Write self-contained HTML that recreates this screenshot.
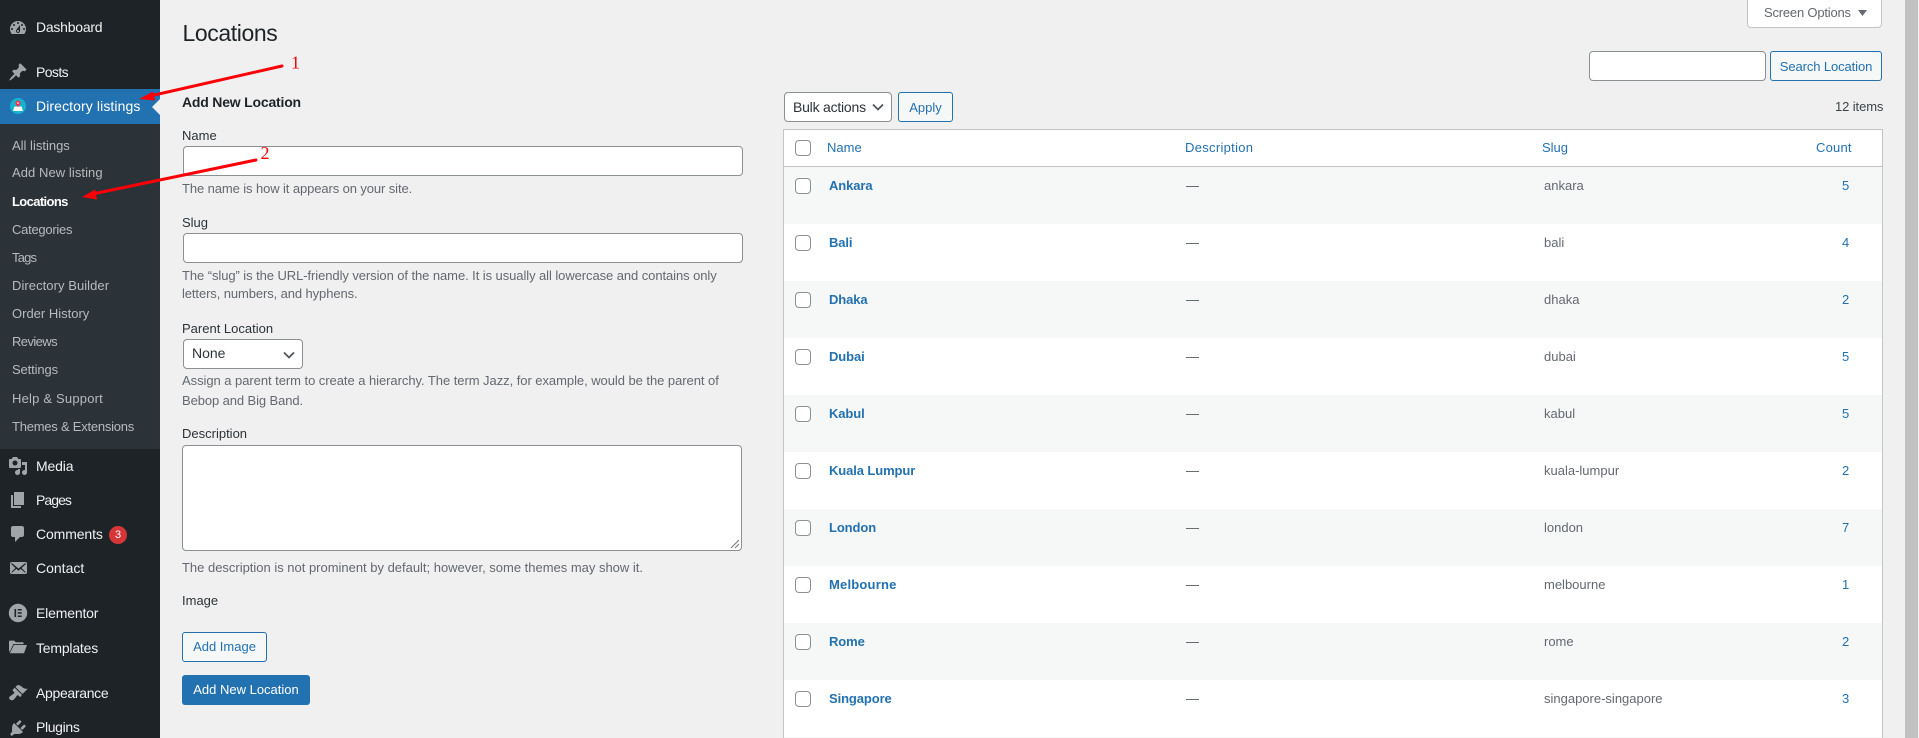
<!DOCTYPE html>
<html lang="en">
<head>
<meta charset="utf-8">
<title>Locations</title>
<style>
html,body{margin:0;padding:0;width:1919px;height:738px;overflow:hidden;background:#f0f0f0;font-family:"Liberation Sans",Arial,sans-serif;font-size:13px;color:#2c3338}
#wrap{position:relative;width:1919px;height:738px;overflow:hidden;background:#f0f0f0}
.t{position:absolute;white-space:nowrap;line-height:20px;height:20px}
.box{position:absolute;box-sizing:border-box}
#side{position:absolute;left:0;top:0;width:160px;height:738px;background:#1d2327}
#sub{position:absolute;left:0;top:124px;width:160px;height:325px;background:#2c3338}
#cur{position:absolute;left:0;top:89px;width:160px;height:35px;background:#2271b1}
#notch{position:absolute;left:152px;top:99px;width:0;height:0;border-style:solid;border-width:8px 8px 8px 0;border-color:transparent #f0f0f0 transparent transparent}
.m{font-size:14px;color:#f0f0f1;left:36px}
.s{font-size:13px;color:#b6babd;left:12px}
svg.i{position:absolute;width:20px;height:20px;fill:#a0a5aa}
.inp{background:#fff;border:1px solid #8c8f94;border-radius:4px}
.btn2{background:#f6f7f7;border:1px solid #2271b1;border-radius:3px;color:#2271b1;text-align:center}
.h{color:#646970}
.l{color:#2c3338}
.cb{position:absolute;left:795px;width:16px;height:16px;box-sizing:border-box;background:#fff;border:1px solid #8c8f94;border-radius:4px}
.row{position:absolute;left:784px;width:1098px;height:57px}
.alt{background:#f6f7f7}
.wh{background:#fff}
.n{left:829px;font-weight:bold;color:#2271b1;font-size:13px;letter-spacing:-.1px}
.d{left:1186px;color:#50575e}
.sl{left:1544px;color:#646970}
.c{left:1842px;width:6px;color:#2271b1}
.th{color:#2271b1;top:138px}
</style>
</head>
<body>
<div id="wrap">
<div id="side"></div>
<div id="sub"></div>
<div id="cur"></div>
<div id="notch"></div>

<svg class="i" style="left:8px;top:18px" viewBox="0 0 20 20"><path d="M3.76 16h12.48c1.1-1.37 1.76-3.11 1.76-5 0-4.42-3.58-8-8-8s-8 3.58-8 8c0 1.89.66 3.63 1.76 5zM10 4c.55 0 1 .45 1 1s-.45 1-1 1-1-.45-1-1 .45-1 1-1zM6 6c.55 0 1 .45 1 1s-.45 1-1 1-1-.45-1-1 .45-1 1-1zm8 0c.55 0 1 .45 1 1s-.45 1-1 1-1-.45-1-1 .45-1 1-1zm-5.37 5.55L12 7v6c0 1.1-.9 2-2 2s-2-.9-2-2c0-.57.24-1.08.63-1.45zM4 10c.55 0 1 .45 1 1s-.45 1-1 1-1-.45-1-1 .45-1 1-1zm12 0c.55 0 1 .45 1 1s-.45 1-1 1-1-.45-1-1 .45-1 1-1zm-5 3c0-.55-.45-1-1-1s-1 .45-1 1 .45 1 1 1 1-.45 1-1z" fill-rule="evenodd"/></svg>
<svg class="i" style="left:8px;top:62px" viewBox="0 0 20 20"><path d="M10.44 3.02l1.82-1.82 6.36 6.35-1.83 1.82c-1.05-.68-2.48-.57-3.41.36l-.75.75c-.92.93-1.04 2.35-.35 3.41l-1.83 1.82-2.41-2.41-2.8 2.79c-.42.42-3.38 2.71-3.8 2.29s1.86-3.39 2.28-3.81l2.79-2.79L4.1 9.36l1.83-1.82c1.05.69 2.48.57 3.4-.36l.75-.75c.93-.92 1.05-2.35.36-3.41z"/></svg>
<svg style="position:absolute;left:10px;top:98px;width:16px;height:16px" viewBox="0 0 16 16"><circle cx="8" cy="8" r="8" fill="#16b3d0"/><path d="M4.5 8.5h7l1.5 4.500H3z" fill="#fff"/><path d="M8 2.500c1.500 0 2.600 1.100 2.600 2.500 0 1.500-1.600 3-2.600 4-1-1-2.600-2.500-2.600-4 0-1.400 1.100-2.500 2.600-2.500z" fill="#f0354a"/><circle cx="8" cy="5" r=".9" fill="#fff"/></svg>
<svg class="i" style="left:8px;top:456px" viewBox="0 0 20 20"><path d="M13 11V4c0-.55-.45-1-1-1h-1.670L9 1H5L3.670 3H2c-.55 0-1 .45-1 1v7c0 .55.45 1 1 1h10c.55 0 1-.45 1-1zM7 4.500c1.380 0 2.500 1.120 2.500 2.500S8.380 9.500 7 9.500 4.500 8.380 4.500 7 5.620 4.500 7 4.500zM14 6h5v10.500c0 1.380-1.120 2.500-2.500 2.500S14 17.880 14 16.500s1.120-2.500 2.500-2.500c.17 0 .34.02.5.05V9h-3V6zm-4 8.050V13h2v3.500c0 1.380-1.120 2.500-2.500 2.500S7 17.880 7 16.500 8.120 14 9.500 14c.17 0 .34.02.5.05z" fill-rule="evenodd"/></svg>
<svg class="i" style="left:8px;top:490px" viewBox="0 0 20 20"><path d="M6 15V2h10v13H6zm-1 1h8v2H3V5h2v11z"/></svg>
<svg class="i" style="left:8px;top:524px" viewBox="0 0 20 20"><path d="M5 2h9c1.100 0 2 .9 2 2v7c0 1.100-.9 2-2 2h-2l-5 5v-5H5c-1.100 0-2-.9-2-2V4c0-1.100.9-2 2-2z"/></svg>
<svg class="i" style="left:8px;top:558px" viewBox="0 0 20 20"><path d="M19 14.500v-9c0-.83-.67-1.500-1.500-1.500H3.490c-.83 0-1.500.67-1.500 1.500v9c0 .83.67 1.500 1.500 1.500H17.500c.83 0 1.500-.67 1.500-1.500zm-1.310-9.110c.33.33.15.67-.03.84L13.600 9.950l3.900 4.060c.12.14.2.36.06.51-.13.16-.43.15-.56.05l-4.370-3.730-2.140 1.950-2.130-1.950-4.370 3.730c-.13.1-.43.11-.56-.05-.14-.15-.06-.37.06-.51l3.900-4.060-4.060-3.720c-.18-.17-.36-.51-.03-.84s.67-.17.95.07l6.240 5.040 6.250-5.040c.28-.24.62-.4.95-.07z" fill-rule="evenodd"/></svg>
<svg class="i" style="left:8px;top:603px" viewBox="0 0 20 20"><circle cx="10" cy="10" r="9.200"/><path d="M6.500 6h1.600v8H6.500zM9.700 6h4v1.500h-4zM9.700 9.250h4v1.500h-4zM9.700 12.500h4V14h-4z" fill="#1d2327"/></svg>
<svg class="i" style="left:8px;top:637px" viewBox="0 0 20 20"><path d="M1 4.500c0-.5.4-.9.9-.9h4.300l1.500 1.700h7c.5 0 .9.4.9.900v.9H5.300L2.400 13.500 1 15zM5.900 8h13.100l-3 8.200H1.800z"/></svg>
<svg class="i" style="left:8px;top:683px" viewBox="0 0 20 20"><path d="M14.480 11.060L7.410 3.990l1.500-1.500c.5-.56 2.300-.47 3.510.32 1.210.8 1.430 1.280 2.910 2.100 1.180.64 2.450 1.260 4.450.85zm-.71.71L6.700 4.700 4.930 6.470c-.39.39-.39 1.020 0 1.410l1.060 1.060c.39.39.39 1.030 0 1.420-.6.6-1.430 1.110-2.210 1.690-.35.26-.7.53-1.010.84C1.430 13.230.4 14.960 1.990 16.500c1.560 1.580 3.260.53 4.580-.79.3-.3.57-.65.83-1.010.58-.79 1.110-1.610 1.690-2.210.39-.39 1.020-.39 1.420 0l1.060 1.060c.39.39 1.020.39 1.410 0z"/></svg>
<svg class="i" style="left:8px;top:718px" viewBox="0 0 20 20"><path d="M13.110 4.360L9.870 7.600 8 5.730l3.240-3.240c.35-.34 1.050-.2 1.560.32.52.51.66 1.210.31 1.550zm-8 1.770l.91-1.120 9.010 9.010-1.190.84c-.71.71-2.630 1.160-3.820 1.160H6.140L4.900 17.260c-.59.59-1.540.59-2.120 0-.59-.58-.59-1.530 0-2.120l1.240-1.240v-3.880c0-1.130.4-3.190 1.090-3.890zm7.260 3.970l3.240-3.240c.34-.35 1.040-.21 1.550.31.52.51.66 1.210.31 1.550l-3.240 3.250z"/></svg>

<div class="t m" style="top:17px;letter-spacing:-.24px">Dashboard</div>
<div class="t m" style="top:62px;letter-spacing:-.6px">Posts</div>
<div class="t m" style="top:96px;color:#fff;letter-spacing:.1px">Directory listings</div>
<div class="t s" style="top:136px">All listings</div>
<div class="t s" style="top:163px;letter-spacing:.07px">Add New listing</div>
<div class="t s" style="top:192px;color:#fff;font-weight:bold;letter-spacing:-.63px">Locations</div>
<div class="t s" style="top:220px;letter-spacing:-.26px">Categories</div>
<div class="t s" style="top:248px;letter-spacing:-.8px">Tags</div>
<div class="t s" style="top:276px;letter-spacing:.06px">Directory Builder</div>
<div class="t s" style="top:304px">Order History</div>
<div class="t s" style="top:332px;letter-spacing:-.59px">Reviews</div>
<div class="t s" style="top:360px;letter-spacing:-.12px">Settings</div>
<div class="t s" style="top:389px;letter-spacing:.2px">Help &amp; Support</div>
<div class="t s" style="top:417px;letter-spacing:-.23px">Themes &amp; Extensions</div>
<div class="t m" style="top:456px;letter-spacing:-.16px">Media</div>
<div class="t m" style="top:490px;letter-spacing:-.94px">Pages</div>
<div class="t m" style="top:524px;letter-spacing:-.12px">Comments</div>
<div class="box" style="left:109px;top:526px;width:18px;height:18px;border-radius:9px;background:#d63638;color:#fff;font-size:11px;line-height:18px;text-align:center">3</div>
<div class="t m" style="top:558px">Contact</div>
<div class="t m" style="top:603px;letter-spacing:-.17px">Elementor</div>
<div class="t m" style="top:638px;letter-spacing:-.2px">Templates</div>
<div class="t m" style="top:683px;letter-spacing:-.32px">Appearance</div>
<div class="t m" style="top:717px;letter-spacing:-.35px">Plugins</div>

<div class="t" style="left:182.500px;top:21px;height:24px;line-height:24px;font-size:23px;color:#1d2327;letter-spacing:-.4px">Locations</div>
<div class="t" style="left:182px;top:92px;font-size:14px;font-weight:bold;color:#1d2327;letter-spacing:-.2px">Add New Location</div>

<div class="t l" style="left:182px;top:126px">Name</div>
<div class="box inp" style="left:183px;top:146px;width:560px;height:30px"></div>
<div class="t h" style="left:182px;top:179px;letter-spacing:-.1px">The name is how it appears on your site.</div>

<div class="t l" style="left:182px;top:213px">Slug</div>
<div class="box inp" style="left:183px;top:233px;width:560px;height:30px"></div>
<div class="t h" style="left:182px;top:266px;letter-spacing:-.075px">The “slug” is the URL-friendly version of the name. It is usually all lowercase and contains only</div>
<div class="t h" style="left:182px;top:284px;letter-spacing:-.1px">letters, numbers, and hyphens.</div>

<div class="t l" style="left:182px;top:319px">Parent Location</div>
<div class="box inp" style="left:183px;top:339px;width:120px;height:30px"></div>
<div class="t" style="left:192px;top:343px;font-size:14px;color:#2c3338">None</div>
<svg style="position:absolute;left:283px;top:350px;width:12px;height:10px" viewBox="0 0 12 10"><path d="M1 2.500l5 5 5-5" fill="none" stroke="#50575e" stroke-width="1.800"/></svg>
<div class="t h" style="left:182px;top:371px;letter-spacing:-.05px">Assign a parent term to create a hierarchy. The term Jazz, for example, would be the parent of</div>
<div class="t h" style="left:182px;top:391px;letter-spacing:-.1px">Bebop and Big Band.</div>

<div class="t l" style="left:182px;top:424px">Description</div>
<div class="box inp" style="left:182px;top:445px;width:560px;height:106px"></div>
<svg style="position:absolute;left:730px;top:538px;width:10px;height:11px" viewBox="0 0 10 11"><path d="M1 10L9 2M5 10l4-4" stroke="#777" stroke-width="1" fill="none"/></svg>
<div class="t h" style="left:182px;top:558px;letter-spacing:-.01px">The description is not prominent by default; however, some themes may show it.</div>

<div class="t l" style="left:182px;top:591px">Image</div>
<div class="box btn2" style="left:182px;top:632px;width:85px;height:30px;line-height:28px">Add Image</div>
<div class="box" style="left:182px;top:675px;width:128px;height:30px;line-height:30px;background:#2271b1;color:#fff;border-radius:3px;text-align:center">Add New Location</div>

<div class="box" style="left:1747px;top:-5px;width:135px;height:33px;background:#fff;border:1px solid #c3c4c7;border-radius:0 0 4px 4px"></div>
<div class="t" style="left:1764px;top:3px;color:#646970;letter-spacing:-.2px">Screen Options</div>
<svg style="position:absolute;left:1858px;top:9px;width:9px;height:8px" viewBox="0 0 9 8"><path d="M0 1h9L4.500 7z" fill="#646970"/></svg>

<div class="box inp" style="left:1589px;top:51px;width:177px;height:30px"></div>
<div class="box btn2" style="left:1770px;top:51px;width:112px;height:30px;line-height:29px;letter-spacing:-.1px">Search Location</div>

<div class="box inp" style="left:784px;top:92px;width:108px;height:30px"></div>
<div class="t" style="left:793px;top:97px;color:#2c3338;font-size:14px;letter-spacing:-.22px">Bulk actions</div>
<svg style="position:absolute;left:872px;top:102px;width:12px;height:10px" viewBox="0 0 12 10"><path d="M1 2.500l5 5 5-5" fill="none" stroke="#50575e" stroke-width="1.800"/></svg>
<div class="box btn2" style="left:898px;top:92px;width:55px;height:30px;line-height:29px">Apply</div>
<div class="t" style="left:1835px;top:97px;color:#3c434a;letter-spacing:-.1px">12 items</div>

<div class="box" style="left:783px;top:129px;width:1100px;height:620px;background:#fff;border:1px solid #c3c4c7"></div>
<div class="box" style="left:784px;top:166px;width:1098px;height:1px;background:#c3c4c7"></div>
<div class="row alt" style="top:167px"></div>
<div class="row wh" style="top:224px"></div>
<div class="row alt" style="top:281px"></div>
<div class="row wh" style="top:338px"></div>
<div class="row alt" style="top:395px"></div>
<div class="row wh" style="top:452px"></div>
<div class="row alt" style="top:509px"></div>
<div class="row wh" style="top:566px"></div>
<div class="row alt" style="top:623px"></div>
<div class="row wh" style="top:680px"></div>
<div class="row alt" style="top:737px;height:1px"></div>

<div class="cb" style="top:140px"></div>
<div class="t th" style="left:827px">Name</div>
<div class="t th" style="left:1185px;letter-spacing:.3px">Description</div>
<div class="t th" style="left:1542px">Slug</div>
<div class="t th" style="left:1816px;letter-spacing:.2px">Count</div>

<div class="cb" style="top:178px"></div><div class="t n" style="top:176px">Ankara</div><div class="t d" style="top:176px">—</div><div class="t sl" style="top:176px">ankara</div><div class="t c" style="top:176px">5</div>
<div class="cb" style="top:235px"></div><div class="t n" style="top:233px">Bali</div><div class="t d" style="top:233px">—</div><div class="t sl" style="top:233px">bali</div><div class="t c" style="top:233px">4</div>
<div class="cb" style="top:292px"></div><div class="t n" style="top:290px">Dhaka</div><div class="t d" style="top:290px">—</div><div class="t sl" style="top:290px">dhaka</div><div class="t c" style="top:290px">2</div>
<div class="cb" style="top:349px"></div><div class="t n" style="top:347px">Dubai</div><div class="t d" style="top:347px">—</div><div class="t sl" style="top:347px">dubai</div><div class="t c" style="top:347px">5</div>
<div class="cb" style="top:406px"></div><div class="t n" style="top:404px">Kabul</div><div class="t d" style="top:404px">—</div><div class="t sl" style="top:404px">kabul</div><div class="t c" style="top:404px">5</div>
<div class="cb" style="top:463px"></div><div class="t n" style="top:461px">Kuala Lumpur</div><div class="t d" style="top:461px">—</div><div class="t sl" style="top:461px">kuala-lumpur</div><div class="t c" style="top:461px">2</div>
<div class="cb" style="top:520px"></div><div class="t n" style="top:518px">London</div><div class="t d" style="top:518px">—</div><div class="t sl" style="top:518px">london</div><div class="t c" style="top:518px">7</div>
<div class="cb" style="top:577px"></div><div class="t n" style="top:575px;letter-spacing:.2px">Melbourne</div><div class="t d" style="top:575px">—</div><div class="t sl" style="top:575px">melbourne</div><div class="t c" style="top:575px">1</div>
<div class="cb" style="top:634px"></div><div class="t n" style="top:632px">Rome</div><div class="t d" style="top:632px">—</div><div class="t sl" style="top:632px">rome</div><div class="t c" style="top:632px">2</div>
<div class="cb" style="top:691px"></div><div class="t n" style="top:689px">Singapore</div><div class="t d" style="top:689px">—</div><div class="t sl" style="top:689px">singapore-singapore</div><div class="t c" style="top:689px">3</div>

<div class="box" style="left:1905px;top:0;width:13px;height:738px;background:#c1c1c1"></div>

<svg style="position:absolute;left:0;top:0;width:1919px;height:738px;pointer-events:none" viewBox="0 0 1919 738">
<path d="M282 66L150 96" stroke="#fb0007" stroke-width="3" stroke-linecap="round" fill="none"/>
<path d="M139 99L153 91.500L155 100.500z" fill="#fb0007"/>
<path d="M256 160L95 193.500" stroke="#fb0007" stroke-width="3" stroke-linecap="round" fill="none"/>
<path d="M82 197L95 189.500L97 199.500z" fill="#fb0007"/>
<text x="295.500" y="68.500" text-anchor="middle" font-family="'Liberation Serif',serif" font-size="18" fill="#fb0007">1</text>
<text x="265" y="159" text-anchor="middle" font-family="'Liberation Serif',serif" font-size="18" fill="#fb0007">2</text>
</svg>
</div>
</body>
</html>
